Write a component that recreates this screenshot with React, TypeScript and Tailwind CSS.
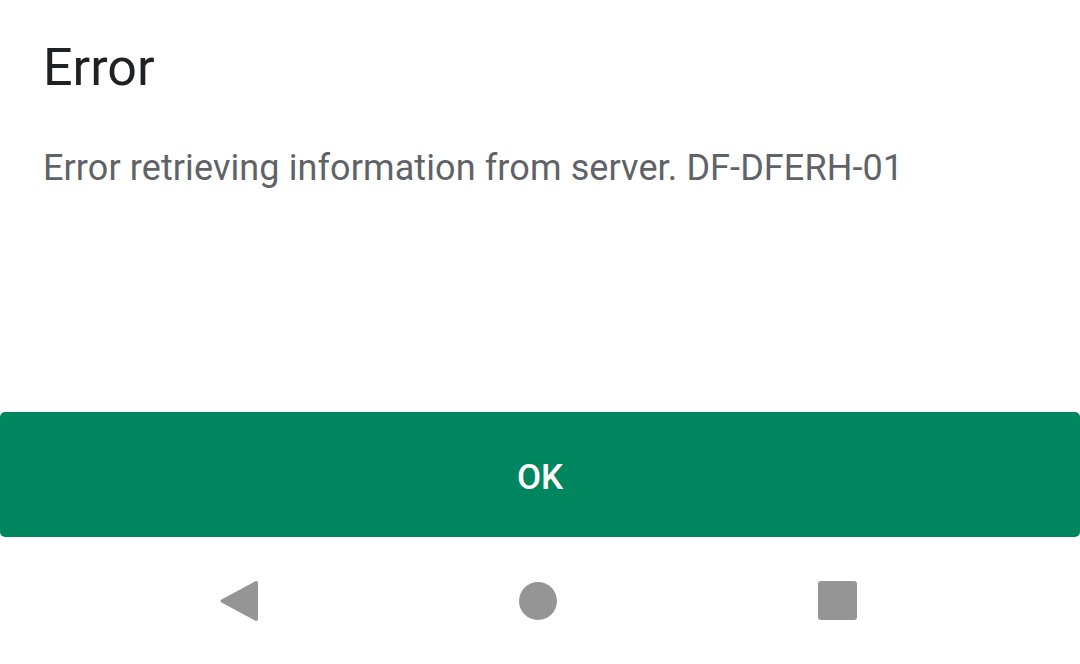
export default function App() {
  return (
    <div className="flex h-[664px] w-[1080px] flex-col bg-white" style={{ fontFamily: 'Roboto, "Noto Sans", sans-serif' }}>
      {/* Dialog body */}
      <div className="flex-1 px-[43px] pt-[38px]">
        <h1 className="text-[52px] leading-[60px] font-normal text-[#202124]">Error</h1>
        <p className="mt-[50px] text-[36px] leading-[40px] tracking-[0.1px] text-[#5f6368]">
          Error retrieving information from server. DF-DFERH-01
        </p>
      </div>

      {/* OK button */}
      <button className="flex h-[125px] w-full items-center justify-center rounded-[5px] bg-[#00865e] pt-[7px] text-[35px] font-medium text-white">
        OK
      </button>

      {/* Android nav bar */}
      <div className="flex h-[127px] items-center justify-center gap-[261px] pr-[3px]">
        <svg width="38" height="42" viewBox="0 0 38 42" className="fill-[#959595]">
          <path d="M35 1.5 C36.5 0.5 38 1.5 38 3 L38 39 C38 40.5 36.5 41.5 35 40.5 L1.5 22.5 C0 21.5 0 20.5 1.5 19.5 Z" />
        </svg>
        <div className="h-[38px] w-[38px] rounded-full bg-[#959595]" />
        <div className="h-[39px] w-[39px] rounded-[3px] bg-[#959595]" />
      </div>
    </div>
  );
}
